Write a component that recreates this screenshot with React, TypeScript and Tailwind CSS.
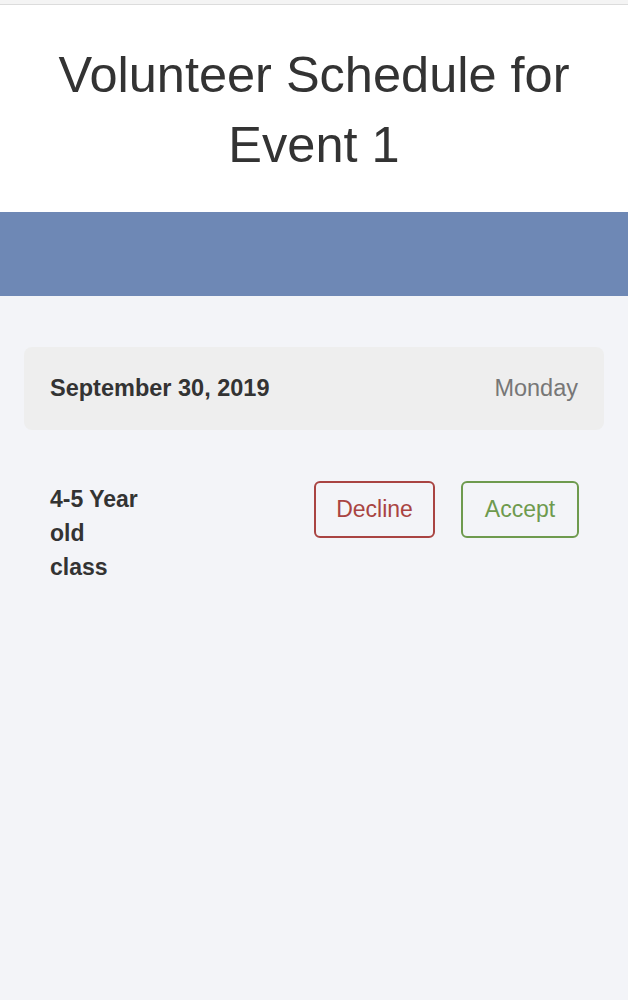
import React from "react";

const App = () => {
  return (
    <div
      className="min-h-[1000px] bg-[#f3f4f8] text-[#333]"
      style={{ fontFamily: '"Liberation Sans", Arial, sans-serif' }}
    >
      <div className="h-[4px] bg-[#f4f4f4]"></div>
      <div className="h-[1px] bg-[#dcdcdc]"></div>
      <header className="bg-white h-[207px] flex items-center justify-center">
        <h1 className="text-center text-[50.5px] leading-[70px] px-10 pt-[2px] text-[#333]">
          Volunteer Schedule for Event 1
        </h1>
      </header>
      <div className="h-[84px] bg-[#6e88b5]"></div>

      <main className="px-6 pt-[51px]">
        <div className="bg-[#eeeeee] rounded-lg h-[83px] px-[26px] flex items-center justify-between">
          <span className="font-bold text-[23.5px]">September 30, 2019</span>
          <span className="text-[23.5px] text-[#777]">Monday</span>
        </div>

        <div className="flex justify-between pl-[26px] pr-[25px] pt-[51px]">
          <div className="w-[96px] font-bold text-[23px] leading-[34px] pt-[1px]">
            4-5 Year old class
          </div>
          <div className="flex gap-[26px]">
            <button className="w-[121px] h-[57px] border-2 border-[#a94442] rounded-md text-[#a94442] text-[23px]">
              Decline
            </button>
            <button className="w-[118px] h-[57px] border-2 border-[#6e9a4e] rounded-md text-[#6e9a4e] text-[23px]">
              Accept
            </button>
          </div>
        </div>
      </main>
    </div>
  );
};

export default App;
